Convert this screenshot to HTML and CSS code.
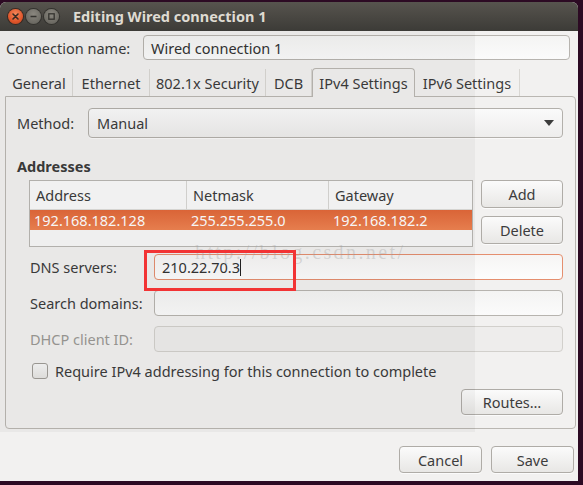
FILE: index.html
```html
<!DOCTYPE html>
<html>
<head>
<meta charset="utf-8">
<link rel="stylesheet" href="styles.css">
</head>
<body>
<div class="window">
  <div class="titlebar">
    <div class="wbtns">
      <span class="wbtn close"><svg width="15" height="15" viewBox="0 0 15 15"><path d="M5 5 L10 10 M10 5 L5 10" stroke="#3a2a22" stroke-width="1.6" stroke-linecap="round"/></svg></span>
      <span class="wbtn grey"><svg width="15" height="15" viewBox="0 0 15 15"><path d="M4.5 7.5 H10.5" stroke="#34332f" stroke-width="1.6"/></svg></span>
      <span class="wbtn grey"><svg width="15" height="15" viewBox="0 0 15 15"><rect x="4.8" y="4.8" width="5.4" height="5.4" fill="none" stroke="#34332f" stroke-width="1.3"/></svg></span>
    </div>
    <div class="title">Editing Wired connection 1</div>
  </div>
  <div class="content">
    <div class="namerow">
      <span class="namelabel">Connection name:</span>
      <div class="entry nameentry">Wired connection 1</div>
    </div>
    <div class="notebook">
      <div class="tabs">
        <div class="tab t1">General</div>
        <div class="tab t2">Ethernet</div>
        <div class="tab t3">802.1x Security</div>
        <div class="tab t4">DCB</div>
        <div class="tab t5 active">IPv4 Settings</div>
        <div class="tab t6">IPv6 Settings</div>
      </div>
      <div class="page">
        <div class="methodrow">
          <span class="methodlabel">Method:</span>
          <div class="combo"><span>Manual</span><svg width="10" height="6" viewBox="0 0 10 6"><path d="M0 0 H10 L5 6 Z" fill="#3c3c3c"/></svg></div>
        </div>
        <div class="heading">Addresses</div>
        <div class="addrrow">
          <div class="table">
            <div class="trow thead">
              <div class="c1">Address</div><div class="c2">Netmask</div><div class="c3">Gateway</div>
            </div>
            <div class="trow tsel">
              <div class="c1">192.168.182.128</div><div class="c2">255.255.255.0</div><div class="c3">192.168.182.2</div>
            </div>
            <div class="tempty"></div>
          </div>
          <div class="btncol">
            <div class="btn">Add</div>
            <div class="btn">Delete</div>
          </div>
        </div>
        <div class="field dns">
          <span class="flabel">DNS servers:</span>
          <div class="entry focus">210.22.70.3<span class="caret"></span></div>
        </div>
        <div class="field">
          <span class="flabel">Search domains:</span>
          <div class="entry"></div>
        </div>
        <div class="field">
          <span class="flabel disabled">DHCP client ID:</span>
          <div class="entry dis"></div>
        </div>
        <div class="checkrow">
          <span class="check"></span>
          <span>Require IPv4 addressing for this connection to complete</span>
        </div>
        <div class="routesrow">
          <div class="btn routes">Routes…</div>
        </div>
      </div>
    </div>
    <div class="actions">
      <div class="btn act">Cancel</div>
      <div class="btn act">Save</div>
    </div>
  </div>
  <div class="shade"></div>
  <div class="watermark">http://blog.csdn.net/</div>
  <div class="redbox"></div>
</div>
</body>
</html>
```

FILE: styles.css
```css
* { box-sizing: border-box; }
html, body { margin: 0; padding: 0; }
body {
  background: #2c0a23;
  width: 583px;
  height: 485px;
  overflow: hidden;
  font-family: "Noto Sans", "Open Sans", sans-serif;
  font-size: 14.5px;
  color: #3c3c3c;
}
.window {
  position: relative;
  width: 578px;
  height: 479px;
  margin-top: 2px;
  background: #f2f1f0;
  border-radius: 6px 6px 0 0;
  overflow: hidden;
}
.titlebar {
  height: 29px;
  display: flex;
  align-items: center;
  padding-left: 8px;
  padding-bottom: 1px;
  background: linear-gradient(#57544e, #3c3b37);
}
.wbtns { display: flex; gap: 3px; }
.wbtn {
  width: 15px; height: 15px; border-radius: 50%;
  display: flex; align-items: center; justify-content: center;
}
.wbtn.close {
  background: radial-gradient(circle at 50% 35%, #f58a5c, #e0552a 60%, #b9401b);
  box-shadow: 0 0 0 1px #3a2a22;
}
.wbtn.grey {
  background: radial-gradient(circle at 50% 35%, #8a877f, #6c6a63 70%, #5a5852);
  box-shadow: 0 0 0 1px #33322e;
}
.title {
  margin-left: 14px;
  color: #dfdbd2;
  font-weight: bold;
  font-size: 14.5px;
}
.content { padding: 4px 2px 0 5px; }
.namerow { display: flex; align-items: center; height: 25px; }
.namelabel { width: 138px; padding-left: 1px; }
.entry {
  height: 26px;
  border: 1px solid #b7b4af;
  border-radius: 4px;
  background: linear-gradient(#f4f4f3, #fbfbfb);
  padding: 0 7px;
  display: flex;
  align-items: center;
  color: #333;
}
.nameentry { width: 427px; height: 25px; }
.notebook { margin-top: 7px; width: 571px; }
.tabs { display: flex; align-items: flex-end; height: 29px; padding-left: 1px; }
.tab {
  height: 27px;
  display: flex;
  align-items: center;
  justify-content: center;
  border-right: 1px solid #d9d7d3;
  white-space: nowrap;
}
.t1 { width: 67px; }
.t2 { width: 77px; }
.t3 { width: 116px; }
.t4 { width: 46px; }
.t5 { width: 103px; }
.t6 { width: 105px; }
.tab.active {
  height: 29px;
  border: 1px solid #bab7b2;
  border-bottom: none;
  border-radius: 4px 4px 0 0;
  background: #f2f1f0;
  position: relative;
  top: 1px;
}
.page {
  border: 1px solid #bab7b2;
  border-radius: 0 4px 4px 4px;
  height: 333px;
  padding: 11px 12px 0 11px;
}
.methodrow { display: flex; align-items: center; }
.methodlabel { width: 71px; }
.combo {
  width: 475px;
  height: 30px;
  border: 1px solid #b3b0ab;
  border-radius: 4px;
  background: linear-gradient(#fafafa, #eeedec);
  display: flex;
  align-items: center;
  justify-content: space-between;
  padding: 0 8px 0 8px;
  box-shadow: 0 1px 0 rgba(255,255,255,0.6);
}
.heading { font-weight: bold; margin-top: 19px; height: 18px; line-height: 18px; }
.addrrow { display: flex; gap: 8px; margin-top: 5px; padding-left: 12px; }
.table {
  width: 444px;
  height: 67px;
  border: 1px solid #b9b7b3;
  background: #f8f8f8;
}
.trow { display: flex; align-items: center; }
.thead { height: 29px; background: #fafafa; }
.thead > div { height: 29px; display: flex; align-items: center; border-right: 1px solid #d8d7d4; border-bottom: 1px solid #dddcd9; }
.thead > div.c3 { border-right: none; }
.c1 { width: 157px; padding-left: 6px; }
.c2 { width: 142px; padding-left: 6px; }
.c3 { flex: 1; padding-left: 6px; }
.tsel {
  height: 20px;
  color: #ffffff;
  background: linear-gradient(#e2683a, #ef8351);
}
.tsel > div { padding-left: 4px; }
.tempty { height: 16px; background: #f8f8f8; }
.btncol { display: flex; flex-direction: column; gap: 8px; }
.btn {
  width: 82px;
  height: 28px;
  border: 1px solid #afaca7;
  border-radius: 4px;
  background: linear-gradient(#fbfbfb, #e8e7e5);
  display: flex;
  align-items: center;
  justify-content: center;
  box-shadow: 0 1px 0 rgba(255,255,255,0.7);
}
.field { display: flex; align-items: center; padding-left: 13px; margin-top: 10px; }
.field.dns { margin-top: 7px; }
.field .entry { width: 409px; }
.flabel { width: 124px; }
.flabel.disabled { color: #9b9995; }
.entry.focus { border-color: #e58f6f; background: linear-gradient(#f6f5f4, #fdfdfd); }
.entry.dis { border-color: #d2d0cc; background: #eeedec; }
.caret { display: inline-block; width: 1px; height: 17px; background: #222; }
.checkrow { display: flex; align-items: center; gap: 7px; padding-left: 15px; margin-top: 9px; height: 20px; }
.check {
  width: 16px; height: 16px;
  border: 1px solid #9f9c97;
  border-radius: 3px;
  background: linear-gradient(#f6f6f6, #e6e5e3);
}
.routesrow { display: flex; justify-content: flex-end; margin-top: 8px; }
.btn.routes { width: 102px; height: 26px; }
.actions { display: flex; justify-content: flex-end; gap: 9px; margin-top: 17px; padding-right: 2px; }
.btn.act { width: 83px; height: 27px; }
.shade {
  position: absolute;
  left: 0; top: 29px;
  width: 475px; height: 401px;
  background: rgba(0,0,0,0.035);
  pointer-events: none;
}
.watermark {
  position: absolute;
  left: 195px; top: 239px;
  font-family: "Liberation Serif", serif;
  font-size: 20px;
  letter-spacing: 2.4px;
  color: rgba(160,160,160,0.35);
  pointer-events: none;
}
.redbox {
  position: absolute;
  left: 144px; top: 248px;
  width: 152px; height: 41px;
  border: 3px solid #f23334;
  pointer-events: none;
}
```
